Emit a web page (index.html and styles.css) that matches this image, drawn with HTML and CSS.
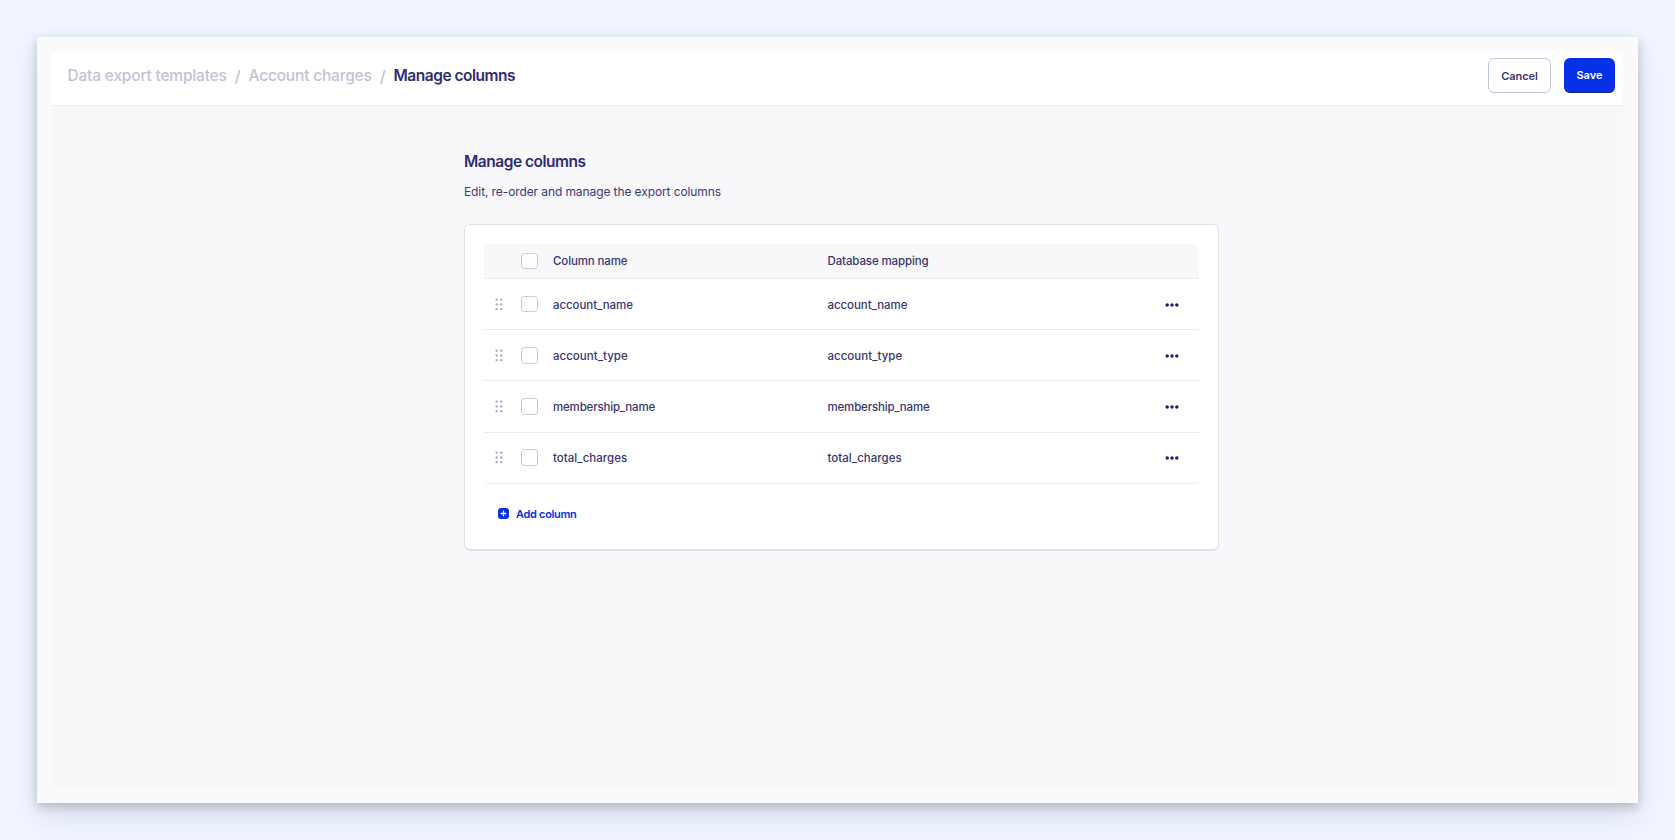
FILE: index.html
```html
<!DOCTYPE html>
<html lang="en">
<head>
<meta charset="utf-8">
<title>Manage columns</title>
<link rel="stylesheet" href="styles.css">
</head>
<body>
<svg class="sprite" aria-hidden="true">
  <symbol id="grip" viewBox="0 0 8 13"><circle cx="1.6" cy="1.7" r="1.15"/><circle cx="6.2" cy="1.7" r="1.15"/><circle cx="1.6" cy="6.5" r="1.15"/><circle cx="6.2" cy="6.5" r="1.15"/><circle cx="1.6" cy="11.2" r="1.15"/><circle cx="6.2" cy="11.2" r="1.15"/></symbol>
  <symbol id="more" viewBox="0 0 14 4"><circle cx="2.2" cy="2" r="1.75"/><circle cx="7" cy="2" r="1.75"/><circle cx="11.8" cy="2" r="1.75"/></symbol>
</svg>
<div class="window">
  <div class="app">
    <header class="topbar">
      <nav class="crumbs"><a class="c1">Data export templates</a><span class="sep">/</span><a class="c2">Account charges</a><span class="sep">/</span><b class="c3">Manage columns</b></nav>
      <div class="actions"><button class="btn cancel"><span>Cancel</span></button><button class="btn save"><span>Save</span></button></div>
    </header>
    <main class="content">
      <h1 class="title"><span>Manage columns</span></h1>
      <p class="subtitle"><span>Edit, re-order and manage the export columns</span></p>
      <section class="card">
        <div class="table">
          <div class="row head"><i></i><span class="check"></span><span class="t">Column name</span><span class="t">Database mapping</span></div>
          <div class="row"><svg class="grip"><use href="#grip"/></svg><span class="check"></span><span class="t">account_name</span><span class="t">account_name</span><svg class="more"><use href="#more"/></svg></div>
          <div class="row"><svg class="grip"><use href="#grip"/></svg><span class="check"></span><span class="t wide">account_type</span><span class="t wide">account_type</span><svg class="more"><use href="#more"/></svg></div>
          <div class="row"><svg class="grip"><use href="#grip"/></svg><span class="check"></span><span class="t tight">membership_name</span><span class="t tight">membership_name</span><svg class="more"><use href="#more"/></svg></div>
          <div class="row last"><svg class="grip"><use href="#grip"/></svg><span class="check"></span><span class="t wide">total_charges</span><span class="t wide">total_charges</span><svg class="more"><use href="#more"/></svg></div>
        </div>
        <button class="add"><svg viewBox="0 0 11 11"><rect width="11" height="11" rx="3"/><path d="M5.5 3.2v4.6M3.2 5.5h4.6"/></svg><span>Add column</span></button>
      </section>
    </main>
  </div>
</div>
</body>
</html>
```
FILE: styles.css
```css
* { box-sizing: border-box; }
body {
  margin: 0;
  height: 840px;
  padding: 37px;
  background: #f0f5ff;
  font-family: Inter, "Liberation Sans", sans-serif;
  color: #2f2d70;
  overflow: hidden;
}
.sprite { display: none; }
.window {
  width: 1601px;
  height: 766px;
  padding: 15px;
  background: #fafafc;
  box-shadow: 0 13px 28px rgba(40, 50, 80, .11), 0 4px 10px rgba(40, 40, 50, .23);
}
.app { height: 735px; background: #f8f8fb; }
.topbar {
  height: 54px;
  padding: 0 8px 7px 15.5px;
  display: flex;
  align-items: center;
  justify-content: space-between;
  background: #fff;
  border-bottom: 1px solid #ebebf0;
}
.crumbs {
  display: flex;
  align-items: center;
  padding-top: 2px;
  font-size: 15.5px;
  font-weight: 500;
  line-height: 20px;
  letter-spacing: -.19px;
  color: #c3c1d7;
  white-space: nowrap;
}
.c1 { width: 159px; }
.c2 { width: 123px; }
.c3 { font-weight: 600; color: #2f2d70; letter-spacing: -.48px; }
.sep { width: 22px; text-align: center; font-size: 16px; }
.actions { display: flex; gap: 13px; }
.btn {
  height: 35px;
  padding: 1px 0 0;
  border-radius: 6px;
  font: 600 11px/14px Inter, "Liberation Sans", sans-serif;
}
.cancel { width: 63px; background: #fff; border: 1px solid #c6c4da; color: #37356f; letter-spacing: -.1px; }
.save { width: 51px; background: #0530e6; border: 0; border-bottom: 1px solid #1d258f; color: #fff; }
.content { width: 755px; margin-left: 412px; padding-top: 45px; }
.title { margin: 0; font-size: 15.5px; line-height: 22px; font-weight: 600; letter-spacing: -.48px; }
.subtitle { margin: 9px 0 0; font-size: 12px; line-height: 20px; letter-spacing: -.1px; color: #3a3976; }
.card {
  height: 327px;
  margin-top: 22px;
  padding: 19px 19px 0 18.5px;
  background: #fff;
  border: 1px solid #e0e0ea;
  border-bottom-width: 2px;
  border-radius: 6px;
}
.row {
  height: 51.2px;
  display: grid;
  grid-template-columns: 37.5px 32px 274.5px 337px 14px;
  align-items: center;
  border-bottom: 1px solid #e9e9ef;
}
.head { height: 35px; background: #f8f8fb; border-radius: 5px 5px 0 0; }
.last { border-radius: 0 0 5px 5px; }
.t { padding-top: 1px; font-size: 11.5px; font-weight: 550; line-height: 16px; letter-spacing: -.06px; color: #37366f; }
.wide { letter-spacing: .02px; }
.tight { letter-spacing: -.18px; }
.head .t { padding: 0; letter-spacing: -.12px; }
.check { width: 16.5px; height: 16.5px; background: #fff; border: 1px solid #c9c7dc; border-radius: 3.5px; }
.grip { width: 8px; height: 13px; margin-left: 11.5px; fill: #a5a3c1; }
.more { width: 14px; height: 4px; margin-top: 1px; fill: #211f69; }
.add {
  display: flex;
  align-items: center;
  gap: 7px;
  margin: 22px 0 0 14.5px;
  padding: 0;
  border: 0;
  background: none;
  font: 600 11px/16px Inter, "Liberation Sans", sans-serif;
  letter-spacing: -.32px;
  color: #0530e6;
}
.add svg { width: 11px; height: 11px; fill: #0530e6; }
.add path { stroke: #fff; stroke-width: 1.3; stroke-linecap: round; }
```
